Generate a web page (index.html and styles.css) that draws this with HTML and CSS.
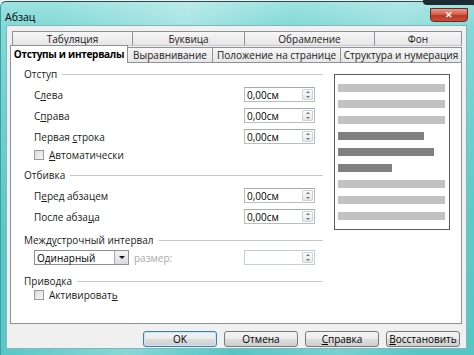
FILE: index.html
```html
<!DOCTYPE html>
<html lang="ru">
  <head>
    <meta charset="UTF-8" />
    <title>Абзац</title>
    <link rel="stylesheet" href="styles.css">
  </head>
  <body>
    <div class="window">
      <div class="desk-corner"></div>
      <!-- Title bar -->
      <div class="titlebar">
        <span class="title">Абзац</span>
        <div class="close">&#x2715;</div>
      </div>

      <!-- Dialog body -->
      <div class="client">
        <div class="tabrow back">
          <div class="tab t-tab">Табуляция</div>
          <div class="tab t-buk">Буквица</div>
          <div class="tab t-obr">Обрамление</div>
          <div class="tab t-fon">Фон</div>
        </div>
        <div class="tabrow front">
          <div class="tab active t-ots">Отступы и интервалы</div>
          <div class="tab t-vyr">Выравнивание</div>
          <div class="tab t-pol">Положение на странице</div>
          <div class="tab t-str">Структура и нумерация</div>
        </div>

        <div class="panel">
          <div class="fields">
            <div class="sec-head sh-1"><span>Отступ</span></div>
            <div class="field">
              <span class="label">С<u>л</u>ева</span>
              <div class="spin"><span class="val">0,00см</span><span class="arrows"><i class="up"></i><i class="down"></i></span></div>
            </div>
            <div class="field">
              <span class="label">С<u>п</u>рава</span>
              <div class="spin"><span class="val">0,00см</span><span class="arrows"><i class="up"></i><i class="down"></i></span></div>
            </div>
            <div class="field">
              <span class="label">Первая <u>с</u>трока</span>
              <div class="spin"><span class="val">0,00см</span><span class="arrows"><i class="up"></i><i class="down"></i></span></div>
            </div>
            <div class="check c-auto"><span class="box"></span><span><u>А</u>втоматически</span></div>

            <div class="sec-head sh-2"><span>Отбивка</span></div>
            <div class="field">
              <span class="label">П<u>е</u>ред абзацем</span>
              <div class="spin"><span class="val">0,00см</span><span class="arrows"><i class="up"></i><i class="down"></i></span></div>
            </div>
            <div class="field">
              <span class="label">После абза<u>ц</u>а</span>
              <div class="spin"><span class="val">0,00см</span><span class="arrows"><i class="up"></i><i class="down"></i></span></div>
            </div>

            <div class="sec-head sh-3"><span>Межд<u>у</u>строчный интервал</span></div>
            <div class="field f-line">
              <div class="combo"><span class="val">Одинарный</span><span class="drop"><i></i></span></div>
              <span class="label dim">размер:</span>
              <div class="spin disabled"><span class="val"></span><span class="arrows"><i class="up"></i><i class="down"></i></span></div>
            </div>

            <div class="sec-head sh-4"><span>Приводка</span></div>
            <div class="check c-act"><span class="box"></span><span>Активироват<u>ь</u></span></div>
          </div>

          <div class="preview">
            <div class="bar"></div>
            <div class="bar"></div>
            <div class="bar"></div>
            <div class="bar dark w1"></div>
            <div class="bar dark w2"></div>
            <div class="bar dark w3"></div>
            <div class="bar"></div>
            <div class="bar"></div>
            <div class="bar"></div>
          </div>
        </div>

        <div class="buttons">
          <button class="btn default">OK</button>
          <button class="btn">Отмена</button>
          <button class="btn"><u>С</u>правка</button>
          <button class="btn"><u>В</u>осстановить</button>
        </div>
      </div>
    </div>
  </body>
</html>
```

FILE: styles.css
```css
* {
  box-sizing: border-box;
  font-family: "Open Sans", "Noto Sans", sans-serif;
}

body {
  margin: 0;
  width: 474px;
  height: 355px;
  overflow: hidden;
  background-color: #e9f1f3;
}

.window {
  position: relative;
  height: 355px;
  margin-top: 1px;
  border-top: 1px solid #2c4a50;
  border-left: 1px solid #3f9ea2;
  border-radius: 6px 6px 0 0;
  background: linear-gradient(100deg, rgba(255,255,255,0) 10%, rgba(255,255,255,0.3) 35%, rgba(255,255,255,0) 55%, rgba(255,255,255,0.2) 75%, rgba(255,255,255,0) 90%),
    linear-gradient(#9de2e0, #80d8d6 26px, #5fcac8 200px, #55c6c4);
}

.desk-corner {
  position: absolute;
  top: -2px;
  right: 0;
  width: 51px;
  height: 5px;
  background-color: #1d2c33;
  border-radius: 0 0 0 4px;
}

.titlebar {
  height: 24px;
  display: flex;
  align-items: center;
  justify-content: space-between;
  padding-left: 4px;
}

.title {
  font-size: 10.5px;
  color: #000;
  margin-top: 5px;
}

.close {
  width: 38px;
  height: 14px;
  margin-right: 6px;
  margin-top: 2px;
  border: 1px solid #6a2a20;
  border-radius: 0 0 4px 4px;
  background: linear-gradient(#e49b8c, #d0604b 45%, #c2371f 55%, #c8503a);
  color: #fff;
  font-size: 9px;
  font-weight: bold;
  text-align: center;
  line-height: 12px;
}

.client {
  height: 322px;
  margin: 0 8px 0 6px;
  padding: 5px 4px 0 3px;
  background-color: #f0f0f0;
  box-shadow: 0 0 0 1px #7fb8ba;
  display: flex;
  flex-direction: column;
}

/* Tabs */
.tabrow {
  display: flex;
  font-size: 10px;
  color: #1a1a1a;
  white-space: nowrap;
}

.tabrow.back {
  height: 15px;
  margin-left: 2px;
}

.tabrow.front {
  height: 16px;
  align-items: flex-end;
  position: relative;
  z-index: 1;
}

.tab {
  height: 15px;
  line-height: 14px;
  text-align: center;
  overflow: hidden;
  border: 1px solid #8e9196;
  border-bottom: none;
  border-left: none;
  background: linear-gradient(#f6f6f6, #e6e6e6);
}

.back .tab {
  border-bottom: 1px solid #c9c9c9;
}

.tab:first-child {
  border-left: 1px solid #8e9196;
}

.t-tab { width: 121px; }
.t-buk { width: 112px; }
.t-obr { width: 130px; }
.t-fon { flex: 1; }

.t-ots { width: 118px; }
.t-vyr { width: 85px; }
.t-pol { width: 128px; }
.t-str { flex: 1; }

.tab.active {
  height: 18px;
  margin-bottom: -1px;
  background-color: #fff;
  background-image: none;
  font-weight: 700;
  letter-spacing: -0.3px;
  line-height: 17px;
  color: #000;
}

.panel {
  height: 262px;
  border: 1px solid #8e9196;
  background-color: #fff;
  display: flex;
  padding: 4px 0 0 13px;
  font-size: 10px;
  color: #1a1a1a;
}

.fields {
  width: 299px;
  display: flex;
  flex-direction: column;
}

.sec-head {
  height: 14px;
  display: flex;
  align-items: center;
  gap: 5px;
  white-space: nowrap;
}

.sec-head::after {
  content: "";
  flex: 1;
  border-top: 1px solid #c8c8c8;
}

.sh-2 { margin-top: 6px; }
.sh-3 { margin-top: 9px; }
.sh-4 { margin-top: 9px; }

.field {
  height: 15px;
  margin-top: 6px;
  padding-left: 10px;
  padding-right: 8px;
  display: flex;
  align-items: center;
}

.field .label {
  flex: 1;
}

.label.dim {
  color: #a8a8a8;
  padding-left: 5px;
}

.f-line {
  margin-top: 3px;
}

.spin {
  width: 71px;
  height: 15px;
  border: 1px solid #b9bcc2;
  border-top-color: #a6a9b0;
  display: flex;
  align-items: center;
  justify-content: space-between;
  padding-left: 2px;
  background-color: #fff;
  color: #000;
}

.spin.disabled {
  border-color: #c3ccd8;
}

.arrows {
  width: 11px;
  height: 11px;
  margin-right: 1px;
  border: 1px solid #cfd2d6;
  border-radius: 1px;
  background: linear-gradient(#fafafa, #e8e8e8);
  display: flex;
  flex-direction: column;
  align-items: center;
  justify-content: space-around;
}

.arrows i {
  width: 0;
  height: 0;
  border-left: 2px solid transparent;
  border-right: 2px solid transparent;
}

.arrows .up { border-bottom: 2px solid #6d7480; }
.arrows .down { border-top: 2px solid #6d7480; }

.combo {
  width: 95px;
  height: 15px;
  border: 1px solid #8b8f96;
  display: flex;
  align-items: center;
  justify-content: space-between;
  padding-left: 2px;
  color: #000;
}

.drop {
  width: 14px;
  height: 13px;
  border-left: 1px solid #a9adb3;
  background: linear-gradient(#f4f4f4, #dcdcdc);
  display: flex;
  align-items: center;
  justify-content: center;
}

.drop i {
  width: 0;
  height: 0;
  border-left: 3px solid transparent;
  border-right: 3px solid transparent;
  border-top: 3px solid #111;
}

.check {
  height: 14px;
  padding-left: 10px;
  display: flex;
  align-items: center;
  gap: 5px;
}

.c-auto { margin-top: 4px; }

.box {
  width: 10px;
  height: 10px;
  border: 1px solid #9a9a9a;
  background: linear-gradient(135deg, #dcdcdc, #f6f6f6);
}

/* Preview page */
.preview {
  width: 116px;
  height: 156px;
  margin: 7px 0 0 11px;
  border: 1px solid #5c5c5c;
  padding: 9px 0 0 3px;
  display: flex;
  flex-direction: column;
  gap: 8px;
}

.bar {
  width: 107px;
  height: 8px;
  background-color: #c2c2c2;
}

.bar.dark { background-color: #808080; }
.bar.w1 { width: 86px; }
.bar.w2 { width: 96px; }
.bar.w3 { width: 54px; }

/* Bottom buttons */
.buttons {
  display: flex;
  justify-content: flex-end;
  gap: 7px;
  margin-top: 7px;
  padding-right: 2px;
}

.btn {
  width: 74px;
  height: 16px;
  padding: 0;
  font-size: 10px;
  color: #000;
  border: 1px solid #7a7a7a;
  border-radius: 3px;
  background: linear-gradient(#f4f4f4, #ebebeb 48%, #dcdcdc 52%, #cfcfcf);
}

.btn.default {
  border-color: #3c7fb1;
  box-shadow: inset 0 0 0 1px #c4e6f7;
}
```
